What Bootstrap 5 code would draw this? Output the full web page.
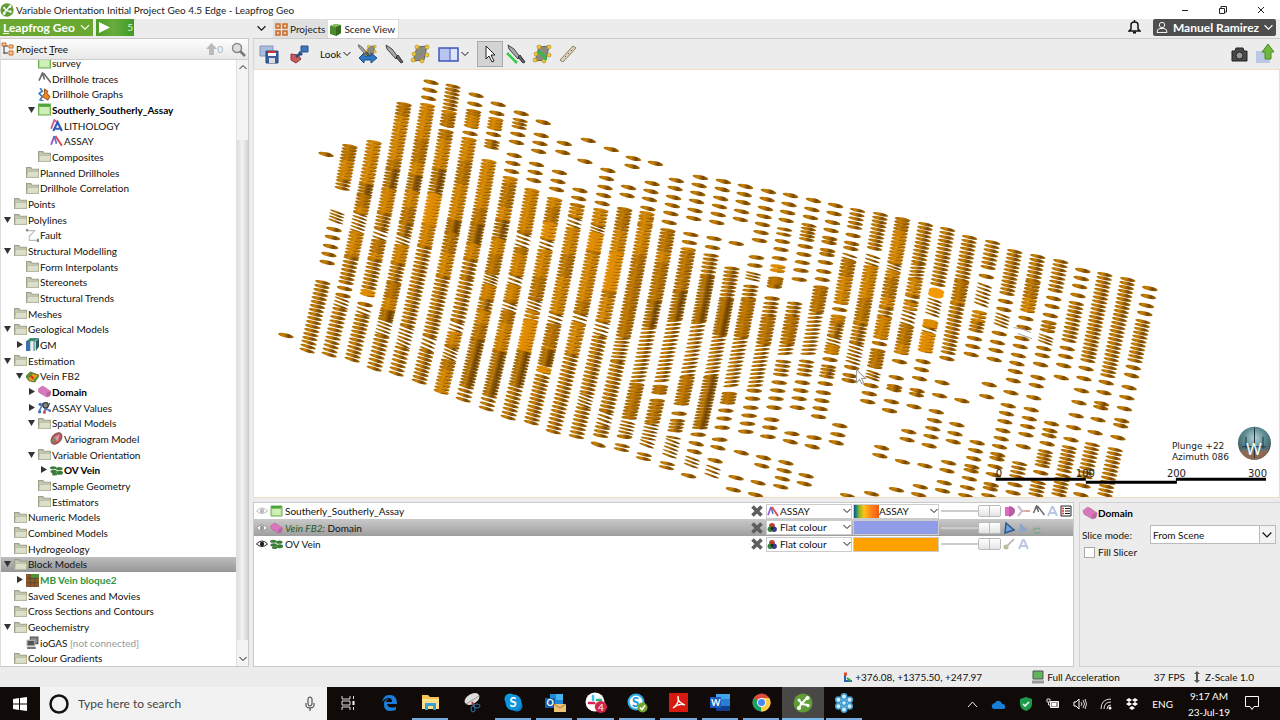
<!DOCTYPE html>
<html lang="en">
<head>
<meta charset="utf-8">
<meta name="viewport" content="width=device-width, initial-scale=1">
<title>Variable Orientation Initial Project Geo 4.5 Edge - Leapfrog Geo</title>
<link href="https://cdn.jsdelivr.net/npm/bootstrap@5.3.0/dist/css/bootstrap.min.css" rel="stylesheet">
<style>
body{font:10px/16px Lato,"Open Sans",sans-serif;color:#111;background:#ececec;height:100vh}
svg{display:block;flex:none}
button,select,input{font:inherit;color:inherit}
button{border:0;background:none;padding:0}
.gap-r{margin-right:2px}
.gap-l{margin-left:2px}
.titlebar{height:19px;background:#fff;color:#222}
.winbtn{width:38px;display:flex;justify-content:center}
.menubar{height:19px}
.menu-left{width:257px;flex:none}
.tabs-wrap{margin-left:7px}
.app-btn{background:#6aa832;color:#fff;font-weight:700;font-size:12px;width:93px;height:17px;line-height:16px;padding:0 3px}
.run-btn{background:linear-gradient(90deg,#4f9a2a,#68ad3c 45%,#3f9a26);color:#dff3c8;width:38px;height:17px;margin-left:3px;padding:0 1px 0 3px}
.user-btn{background:#4e4e4e;color:#fff;font-weight:700;font-size:12px;height:17px;width:123px;border-radius:2px;margin-right:4px;padding:0 3px}
.view-tab{height:19px;color:#222;text-decoration:none;padding:0 1px;border:1px solid #ddd;border-bottom:0;background:#e0e0e0}
.view-tab.active{background:#fff;padding-right:3px}
.left-pane{width:249px;border:1px solid #c9c9c9;border-left-color:#ddd;margin-bottom:20px;background:#fff}
.pane-head{height:21px;background:linear-gradient(#fdfdfd,#e8e8e8);border-bottom:1px solid #ccc}
.tree{margin:-5px 0 0;min-height:0}
.tree li{flex:1 1 0;min-height:0;display:flex;align-items:center;white-space:nowrap}
.tree li.sel{background:linear-gradient(#bdbdbd,#979797);}
.twist{width:12px;display:flex;justify-content:center;flex:none}
.d0{padding-left:1px}.d1{padding-left:13px}.d2{padding-left:25px}.d3{padding-left:37px}
.tree li svg{margin-right:1px}
.sbar{width:12px;background:#f3f3f3;border-left:1px solid #e2e2e2}
.sthumb{background:linear-gradient(90deg,#ddd,#f2f2f2 50%,#d2d2d2);margin-top:66px}
.toolbar{height:31px;border-top:1px solid #ccc;border-left:1px solid #d4d4d4}
.tool{width:26px;height:26px;display:flex;align-items:center;justify-content:center}
.tool.on{background:#d3d3d3;border:1px solid #aaa}
.scene{background:#fff;border:1px solid #f1dcc4;min-height:0;overflow:hidden}
.scene svg{width:100%;height:100%}
.lower{height:169px;padding-top:4px}
.shapes{background:#fff;border:1px solid #c9c9c9}
.srow{height:16px;padding-left:2px}
.srow.sel{height:17px;background:linear-gradient(#c9c9c9,#9e9e9e)}
.srow select{appearance:none;border:1px solid #ccc;background:#fff;height:15px;line-height:13px;padding:0 12px 0 13px;width:86px}
.pick{position:relative;width:86px;margin-left:1px}
.pick svg{position:absolute;top:2px}
.pick svg.lead-ic{left:1px}.pick svg.arrow-ic{right:1px;top:4px}
.srow select.grad{padding-left:25px;background:linear-gradient(90deg,#1b4f9e 0,#2a8c66 10%,#8db32a 20%,#ffc313 40%,#ff8a1c 65%,#f25a13 100%) 0 0/25px 100% no-repeat #fff}
.swatch{width:86px;height:15px;border:1px solid #ccc;margin-left:1px}
.blue{background:#909ce8}.orange{background:#ffa200}
.srow input[type=range]{appearance:none;width:60px;height:12px;margin:0 2px;background:linear-gradient(#ccc,#ccc) 0 50%/100% 2px no-repeat}
.srow input[type=range]::-webkit-slider-thumb{appearance:none;width:23px;height:12px;border:1px solid #bbb;border-radius:2px;background:linear-gradient(90deg,transparent 10px,#bbb 10px,#bbb 11px,transparent 11px),linear-gradient(#fff,#e4e4e4)}
.sicons{width:70px;gap:1px}
.props{width:201px;margin-left:5px;border:1px solid #d2d2d2;border-right:0;padding:2px 4px 0 2px}
.props select{appearance:none;width:126px;height:19px;border:1px solid #bbb;background:linear-gradient(90deg,#fff 108px,#bbb 108px,#bbb 109px,#f3f3f3 109px);padding:0 2px;line-height:16px}
.props .pick{width:126px;margin:0}
.props .pick svg{right:4px;top:6px}
.props input[type=checkbox]{appearance:none;width:11px;height:11px;border:1px solid #aaa;background:#fff;margin:0 3px 0 2px}
.statusbar{height:20px;margin-top:-20px;padding-right:26px}
.taskbar{height:33px;background:#100b08;color:#fff}
.start{width:40px;height:33px}
.searchbox{width:287px;background:#f2f2f2;padding:0 12px 0 9px;color:#333}
.searchbox input{border:0;background:none;font-size:12px;width:200px;margin-left:9px;padding:0;outline:0}
.searchbox input::placeholder{color:#444;opacity:1}
.apps{width:538px}
.apps button{flex:1 1 0;display:flex;align-items:center;justify-content:center;border-bottom:2px solid transparent}
.apps .run{border-image:linear-gradient(90deg,transparent 4px,#76a9dc 4px,#76a9dc 37px,transparent 37px) 2}
.apps .front{background:#4a4846;border-bottom-color:#76b9ed}
.tray{gap:13px;margin-right:21px}
.clock{width:46px;line-height:16px;text-align:center}
</style>
</head>
<body class="d-flex flex-column overflow-hidden">
<svg width="0" height="0" class="position-absolute" aria-hidden="true">
<defs>
<linearGradient id="gd" x1="0" x2="1"><stop offset="0" stop-color="#a66a00"/><stop offset=".35" stop-color="#c88005"/><stop offset=".68" stop-color="#744600"/><stop offset="1" stop-color="#b97400"/></linearGradient>
<linearGradient id="gk" x1="0" x2="1"><stop offset="0" stop-color="#9a6300"/><stop offset=".4" stop-color="#b87400"/><stop offset=".7" stop-color="#6b4100"/><stop offset="1" stop-color="#9a6000"/></linearGradient>
<linearGradient id="gs" x1="0" x2="1"><stop offset="0" stop-color="#b97300"/><stop offset=".4" stop-color="#d68800"/><stop offset="1" stop-color="#bd7500"/></linearGradient>
<linearGradient id="gn" x1="0" x2="1"><stop offset="0" stop-color="#a36600"/><stop offset=".4" stop-color="#c17900"/><stop offset="1" stop-color="#9a6000"/></linearGradient>
<radialGradient id="globe" cx=".5" cy=".35" r=".65"><stop offset="0" stop-color="#b9d4d8"/><stop offset=".5" stop-color="#5b8a93"/><stop offset="1" stop-color="#3c4d50"/></radialGradient>
<symbol id="folder" viewBox="0 0 12 12"><path d="M.5 10.5v-9h4l1 1.5h6v7.5z" fill="#c5c8b2" stroke="#9da18c"/><path d="M1.500 5h10v5.500H.8z" fill="#dcdfca" stroke="#b2b69f" stroke-width=".6"/></symbol>
<symbol id="table" viewBox="0 0 12 12"><path d="M.5 1h11v10H.5z" fill="#b8e59a" stroke="#6fae54"/><path d="M1 1h10v2.500H1z" fill="#4ea238"/><path d="M2 4h8v6H2z" fill="#d0f0b9"/></symbol>
<symbol id="traces" viewBox="0 0 12 12"><path d="M1 8 4 1l2 6M5 1l7 9" fill="none" stroke="#6a6a6a" stroke-width="1.500"/></symbol>
<symbol id="assay" viewBox="0 0 12 12"><path d="M1 9 4 1" stroke="#9b54cf" stroke-width="1.700"/><path d="M4 1l2 7" stroke="#4c71ce" stroke-width="1.500"/><path d="M5 1l6 9" stroke="#e0484c" stroke-width="1.800"/></symbol>
<symbol id="lith" viewBox="0 0 12 12"><path d="M1 9 4 1l4 3" fill="none" stroke="#d55086" stroke-width="1.600"/><path d="M3 11 7 3l4 8M4 9h7" fill="none" stroke="#315fb8" stroke-width="2"/></symbol>
<symbol id="graphs" viewBox="0 0 12 12"><path d="M2 0l2 3-3 2 3 3-2 3 3 1" fill="none" stroke="#3979c6" stroke-width="1.500"/><path d="M6 1l3 2-1 2 3 3-2 3-3-2-2-1 2-3z" fill="#ec8b20" stroke="#a95d20"/></symbol>
<symbol id="poly" viewBox="0 0 12 12"><path d="M1 1.500h7L3 7v3.500h8" fill="none" stroke="#bcbcc0"/><path d="M0 0h2v2H0zM10 9h2v3h-2z" fill="#799184"/></symbol>
<symbol id="gm" viewBox="0 0 12 12"><path d="M0 3 4 0h8L8 3v9H0z" fill="#3f8b72"/><path d="M0 3h3v9H0z" fill="#3c6fae"/><path d="M4 3h3v9H4z" fill="#eef"/><path d="M9 3l3-3v8l-3 4z" fill="#2f5b69"/></symbol>
<symbol id="vein" viewBox="0 0 12 12"><path d="M0 6l4-4 8 3-4 6-5-1z" fill="#e0a21b" stroke="#6e6a22"/><path d="M4 2l3 1-5 5-2-2zM7 9l4-4 1 1-4 5z" fill="#4e9b3c"/><path d="M4 5l3 3" stroke="#d32" stroke-width="2"/></symbol>
<symbol id="domain" viewBox="0 0 12 12"><path d="M0 4l4-3 2 1 6 4-1 4-3 1-7-4z" fill="#d977bd" stroke="#b860a0" stroke-width=".6"/><path d="M8 7l4-1-1 4-3 1z" fill="#b565a0"/></symbol>
<symbol id="values" viewBox="0 0 12 12"><path d="M1 10l3-7 3 5 4-6M5 11l2-4 4 2" fill="none" stroke="#5a78b8" stroke-width="1.500"/><circle cx="7" cy="4" r="2.500" fill="#888" stroke="#333"/><circle cx="2" cy="3" r="1.500" fill="#3f70bd"/><circle cx="1.500" cy="10" r="1.500" fill="#3f70bd"/><circle cx="6" cy="10.500" r="1.300" fill="#d5444a"/><circle cx="11" cy="9" r="1.200" fill="#3f70bd"/></symbol>
<symbol id="vario" viewBox="0 0 12 12"><ellipse cx="6" cy="6" rx="6" ry="4" transform="rotate(-48 6 6)" fill="#c0575b" stroke="#84554f"/><path d="M4 5l5-3-2 7z" fill="#d0a0b4"/><path d="M2 9l3-3" stroke="#689c55" stroke-width="2"/></symbol>
<symbol id="ov" viewBox="0 0 14 12"><g fill="#397d38"><ellipse cx="3.500" cy="3" rx="3.500" ry="1.700"/><ellipse cx="4" cy="7" rx="3.500" ry="1.700"/><ellipse cx="5" cy="10" rx="3" ry="1.500"/><ellipse cx="10" cy="4" rx="3.500" ry="1.700"/><ellipse cx="10.500" cy="8.500" rx="3.500" ry="2.200"/></g></symbol>
<symbol id="block" viewBox="0 0 12 12"><path d="M0 0h12v12H0z" fill="#8a5a2c"/><path d="M4 0h8v4H4z" fill="#4f9137"/><path d="M0 4h12M4 0v12M8 4v8M0 8h12" stroke="#5c4024" stroke-width=".7"/></symbol>
<symbol id="iogas" viewBox="0 0 12 12"><path d="M4 1h7v6H4z" fill="#888" stroke="#555"/><path d="M1 4h7v5H1z" fill="#555" stroke="#aaa"/><path d="M1 11h8" stroke="#777" stroke-width="2"/></symbol>
<symbol id="rgb" viewBox="0 0 12 12"><circle cx="6" cy="4" r="3.500" fill="#b8402f"/><circle cx="4" cy="8" r="3.300" fill="#37823a"/><circle cx="8.500" cy="8" r="3.300" fill="#353d80"/><circle cx="6" cy="7" r="1.500" fill="#222"/></symbol>
<symbol id="down" viewBox="0 0 8 6"><path d="M.5 1 4 4.500 7.500 1" fill="none" stroke="currentColor"/></symbol>
<symbol id="eye" viewBox="0 0 12 8"><path d="M.5 4Q6-2 11.500 4 6 9 .5 4z" fill="#fff" stroke="currentColor"/><circle cx="6" cy="4" r="2.200" fill="currentColor"/></symbol>
<symbol id="del" viewBox="0 0 12 12"><path d="M1.500 1.500l9 9m0-9l-9 9" stroke="#5e5e5e" stroke-width="3.600"/></symbol>
<symbol id="frog" viewBox="0 0 20 20"><circle cx="10" cy="10" r="9.500" fill="#5f9c35"/><path d="M14 5 8 11l-2 4M6 7l3 4 6 1" stroke="#fff" stroke-width="2" fill="none"/><circle cx="14.500" cy="5" r="2" fill="#fff"/><circle cx="6" cy="15" r="2" fill="#fff"/><circle cx="15" cy="12.500" r="1.700" fill="#fff"/><circle cx="6" cy="7" r="1.500" fill="#fff"/></symbol>
<symbol id="knife" viewBox="0 0 20 20"><path d="M2 1l6 4 6 8-2 2L3 5z" fill="#aaa" stroke="#444"/><path d="M12 13l2-2 5 7-2 1z" fill="#666" stroke="#333"/></symbol>
<symbol id="slab" viewBox="0 0 20 20"><path d="M7 3l10-1-3 14-11 1z" fill="#8b8b80" stroke="#666"/><g fill="#f3ca35" stroke="#a88417" stroke-width=".6"><circle cx="7" cy="3" r="2"/><circle cx="17" cy="3" r="2"/><circle cx="17" cy="11" r="2"/><circle cx="12" cy="17" r="2"/><circle cx="3" cy="16" r="2"/><circle cx="4" cy="10" r="2"/></g></symbol>
<symbol id="letterA" viewBox="0 0 12 12"><path d="M1.500 11 5.500 2h1l4 9M3 8h6" fill="none" stroke="#bdc7e4" stroke-width="2"/></symbol>
</defs></svg>

<header class="titlebar d-flex align-items-center">
<svg width="14" height="14" class="gap-r"><use href="#frog"/></svg><span class="flex-grow-1 text-nowrap">Variable Orientation Initial Project Geo 4.5 Edge - Leapfrog Geo</span>
<button class="winbtn" aria-label="Minimise"><svg width="8" height="8"><path d="M1 4.500h6" stroke="#222"/></svg></button>
<button class="winbtn" aria-label="Restore"><svg width="8" height="8"><path d="M.5 2.500h5v5h-5zM2 2V.5h5.500V6H6" fill="none" stroke="#222"/></svg></button>
<button class="winbtn" aria-label="Close"><svg width="8" height="8"><path d="M1 1l6 6m0-6L1 7" stroke="#222"/></svg></button>
</header>

<nav class="menubar d-flex align-items-start">
<div class="menu-left d-flex">
<button class="app-btn d-flex align-items-center justify-content-between text-nowrap"><span><u>L</u>eapfrog Geo</span><svg width="10" height="7"><use href="#down"/></svg></button>
<button class="run-btn d-flex justify-content-between align-items-start" aria-label="Processing queue"><svg width="12" height="16"><path d="M0 3l11 5.500L0 14z" fill="#fff"/></svg><span>5</span></button>
</div>
<button class="align-self-center" aria-label="Show tabs"><svg width="9" height="7"><use href="#down"/></svg></button>
<div class="d-flex tabs-wrap">
<a href="#" class="view-tab d-flex align-items-center"><svg width="13" height="13" class="gap-r"><path d="M1 1h4v4H1zM8 1h4v4H8zM1 8h4v4H1zM8 8h4v4H8z" fill="#f6c89c" stroke="#c86a2a" stroke-width="1.500"/></svg>Projects</a>
<a href="#" class="view-tab active d-flex align-items-center"><svg width="13" height="13" class="gap-r"><path d="M1 3l5-2 6 1v8l-5 3-6-2z" fill="#4e8a30"/><path d="M1 3l5-2 6 1-5 2z" fill="#8cc167"/><path d="M7 4l5-2v8l-5 3z" fill="#386b21"/></svg>Scene View</a>
</div>
<button class="ms-auto me-2 px-1" aria-label="Notifications"><svg width="13" height="16"><path d="M1 12h11l-2-2V6Q10 3 6.500 3T3 6v4zM6.500 1v2" fill="none" stroke="#111" stroke-width="1.500"/><path d="M5 13.500h3" stroke="#111" stroke-width="2"/></svg></button>
<button class="user-btn d-flex align-items-center justify-content-between text-nowrap"><svg width="12" height="13"><circle cx="6" cy="4" r="2.700" fill="none" stroke="#eee"/><path d="M1 11.500q0-4 3-4h4q3 0 3 4z" fill="none" stroke="#eee"/></svg>Manuel Ramirez<svg width="9" height="7"><use href="#down"/></svg></button>
</nav>

<div class="d-flex flex-grow-1" style="min-height:0">
<aside class="left-pane d-flex flex-column flex-shrink-0">
<div class="pane-head d-flex align-items-center flex-shrink-0"><svg width="13" height="14" class="gap-r"><path d="M3 1v11M3 4h4M3 11h4" stroke="#333" fill="none"/><path d="M1 1h4v3H1zM8 3h4v3H8zM8 9h4v4H8z" fill="#f6c89c" stroke="#c86a2a"/></svg><span class="flex-grow-1">Project <u>T</u>ree</span><svg width="11" height="12"><path d="M5.500 0 11 6H8v6H3V6H0z" fill="#bbb"/></svg><span class="text-secondary opacity-50 me-2">0</span><svg width="15" height="15" class="gap-r"><circle cx="6" cy="6" r="4.500" fill="#ddd" stroke="#888" stroke-width="1.500"/><path d="M9 9l5 5" stroke="#777" stroke-width="2.500"/></svg></div>
<div class="d-flex flex-grow-1 overflow-hidden" style="min-height:0">
<ul class="tree list-unstyled d-flex flex-column flex-grow-1" id="tree"></ul>
<div class="sbar d-flex flex-column align-items-center flex-shrink-0"><svg width="8" height="6" class="my-1"><path d="M.5 5 4 1.500 7.500 5" fill="none" stroke="#222"/></svg><div class="sthumb w-100 flex-grow-1"></div><svg width="8" height="6" class="mt-3 mb-1"><use href="#down"/></svg></div>
</div>
</aside>

<main class="d-flex flex-column flex-grow-1 ms-1" style="min-width:0">
<div class="toolbar d-flex align-items-center flex-shrink-0">
<button class="tool gap-l me-1" aria-label="Save scene"><svg width="20" height="20"><path d="M1 2h13v10H1z" fill="#a9bddc" stroke="#8297b8"/><path d="M7 7h12v12H7z" fill="#375f9f" stroke="#274778"/><path d="M9 7h8v5H9z" fill="#fff"/><path d="M9 7h8v2H9z" fill="#d42f2f"/><path d="M10 14h6v5h-6z" fill="#ddd"/></svg></button>
<button class="tool me-2" aria-label="Clear scene"><svg width="20" height="20"><path d="M2 10l7 1 3 4-5 4-5-3z" fill="#c95b5b" stroke="#8e3333"/><path d="M12 2h7v6h-7z" fill="#3b78c0" stroke="#294f81"/><path d="M12 9l-5 4M10 8l3 3" stroke="#244d87" stroke-width="2.500"/></svg></button>
<button class="d-flex align-items-center me-1"><span class="gap-r">Look</span><svg width="8" height="6"><use href="#down"/></svg></button>
<button class="tool" aria-label="Slicer"><svg width="22" height="20"><use href="#slab" x="7" y="0" width="13" height="14"/><use href="#knife" width="14" height="14"/><path d="M2 14l5-5v3h7V9l6 5-6 5v-3H7v3z" fill="#2d78c8" stroke="#1c4c89"/></svg></button>
<button class="tool" aria-label="Draw slicer"><svg width="20" height="20"><use href="#knife"/></svg></button>
<button class="tool" aria-label="Moving plane"><svg width="20" height="20"><use href="#slab"/></svg></button>
<button class="tool gap-l" aria-label="Split view"><svg width="21" height="15"><path d="M1 1h19v13H1z" fill="#b9c5f0" stroke="#4058b8" stroke-width="1.500"/><path d="M12 2h7v11h-7z" fill="#dde3fa"/><path d="M12 1v13" stroke="#4058b8"/></svg></button>
<svg width="8" height="6" class="me-2"><use href="#down"/></svg>
<button class="tool on" aria-label="Select"><svg width="13" height="18"><path d="M2 1v13l3-3 3 6 2-1-3-6h4z" fill="#fff" stroke="#222"/></svg></button>
<button class="tool" aria-label="Draw line"><svg width="20" height="20"><use href="#knife"/><path d="M1 9l10 10" stroke="#35cc45" stroke-width="2.500"/></svg></button>
<button class="tool" aria-label="Draw plane"><svg width="20" height="20"><use href="#slab"/><path d="M5 8q6 0 9 8" stroke="#35bb45" stroke-width="3" fill="none"/></svg></button>
<button class="tool" aria-label="Ruler"><svg width="20" height="20"><path d="M2 16 15 2l3 2L5 18z" fill="#ddd0b5" stroke="#8e806a"/><path d="M7 12l1 1m2-4 1 1m2-4 1 1" stroke="#75674f"/></svg></button>
<button class="tool ms-auto" aria-label="Screenshot"><svg width="17" height="15"><path d="M1 4h3l1-3h7l1 3h3v10H1z" fill="#494949" stroke="#222"/><circle cx="8.500" cy="8.500" r="3.500" fill="#999" stroke="#222"/></svg></button>
<button class="tool gap-r" aria-label="Export scene"><svg width="20" height="20"><path d="M1 7h14v12H1z" fill="#bac8e4"/><path d="M13 0l6 8h-3v7h-6V8H7z" fill="#70b83c" stroke="#4c8d25"/></svg></button>
</div>

<div class="scene flex-grow-1"><svg viewBox="255 70 1024 426" id="scene" role="img" aria-label="Disc view of OV Vein"><g id="discs"></g>
<path d="M1014 327q10 1 17 5M1018 333l14 5" stroke="#888" fill="none" stroke-width=".8"/>
<path d="M857 369v13l3-3 2 4 2-1-2-4h4z" fill="#fff" stroke="#999"/>
<g font-family="DejaVu Sans,sans-serif" font-size="10" fill="#222"><text x="1172" y="448" font-size="9">Plunge +22</text><text x="1172" y="459" font-size="9">Azimuth 086</text><text x="996" y="476">0</text><text x="1076" y="476">100</text><text x="1167" y="476">200</text><text x="1248" y="476">300</text></g>
<path d="M996 478.500h90M1176 478.500h90M1086 481.500h91" stroke="#000" stroke-width="3"/>
<circle cx="1254.500" cy="442.500" r="16.500" fill="url(#globe)"/><path d="M1240 448q14 6 29 0-4 11-15 11t-14-11z" fill="#a06c4c" opacity=".8"/><path d="M1254.500 427v30M1246 436v12M1263 436v12M1242 446h24" stroke="#1c3339" fill="none"/><text x="1246" y="454" font-family="Open Sans" font-size="17" fill="#fff">W</text>
</svg></div>

<div class="lower d-flex flex-shrink-0">
<div class="shapes flex-grow-1">
<div class="srow d-flex align-items-center"><svg width="12" height="8" class="gap-r" color="#bbb"><use href="#eye"/></svg><svg width="13" height="12" class="gap-r"><use href="#table"/></svg><span class="flex-grow-1">Southerly_Southerly_Assay</span><svg width="12" height="12" class="gap-r"><use href="#del"/></svg>
<div class="pick"><select aria-label="Assay colouring" class="d-block"><option>ASSAY</option></select><svg class="lead-ic" width="12" height="12"><use href="#assay"/></svg><svg class="arrow-ic" width="8" height="6"><use href="#down"/></svg></div>
<div class="pick"><select aria-label="Assay colourmap" class="grad d-block"><option>ASSAY</option></select><svg class="arrow-ic" width="8" height="6"><use href="#down"/></svg></div>
<input type="range" value="100" aria-label="Assay opacity"><div class="sicons d-flex"><svg width="13" height="13"><path d="M2 2h4v9H2z" fill="#dc6cc0"/><path d="M6 1q6 1 6 5t-6 6z" fill="#b95aa6"/></svg><svg width="14" height="12"><path d="M1 1l4 5-4 5M5 6h4" fill="none" stroke="#cbb6d0" stroke-width="2"/><path d="M9 6h4" stroke="#e9a08c" stroke-width="2"/></svg><svg width="13" height="12"><use href="#traces"/></svg><svg width="13" height="12"><use href="#letterA"/></svg><svg width="12" height="12"><path d="M1 1h10v10H1z" fill="#fff" stroke="#222"/><path d="M2 3.500h2M2 6h2M2 8.500h2" stroke="#d33" stroke-width="1.500"/><path d="M5 3.500h5M5 6h5M5 8.500h5" stroke="#222"/></svg></div></div>
<div class="srow sel d-flex align-items-center"><svg width="12" height="8" class="gap-r" color="#999"><use href="#eye"/></svg><svg width="13" height="12" class="gap-r"><use href="#domain"/></svg><span class="flex-grow-1"><i style="color:#245c24">Vein FB2:</i> Domain</span><svg width="12" height="12" class="gap-r"><use href="#del"/></svg>
<div class="pick"><select aria-label="Domain colouring" class="d-block"><option>Flat colour</option></select><svg class="lead-ic" width="10" height="11"><use href="#rgb"/></svg><svg class="arrow-ic" width="8" height="6"><use href="#down"/></svg></div>
<button class="swatch blue" aria-label="Domain colour"></button><input type="range" value="100" aria-label="Domain opacity"><div class="sicons d-flex"><svg width="13" height="12"><path d="M3 1l8 7-9 3z" fill="#6fa4dc" stroke="#2c578e" stroke-width="1.500"/></svg><svg width="13" height="12"><path d="M3 1l8 7-9 3z" fill="#8ea6c6"/></svg><svg width="12" height="12"><path d="M2 8l4-2 3 1M3 11h7" stroke="#7da98a" fill="none" stroke-width="1.500"/></svg></div></div>
<div class="srow d-flex align-items-center"><svg width="12" height="8" class="gap-r" color="#222"><use href="#eye"/></svg><svg width="13" height="12" class="gap-r"><use href="#ov"/></svg><span class="flex-grow-1">OV Vein</span><svg width="12" height="12" class="gap-r"><use href="#del"/></svg>
<div class="pick"><select aria-label="OV Vein colouring" class="d-block"><option>Flat colour</option></select><svg class="lead-ic" width="10" height="11"><use href="#rgb"/></svg><svg class="arrow-ic" width="8" height="6"><use href="#down"/></svg></div>
<button class="swatch orange" aria-label="OV Vein colour"></button><input type="range" value="100" aria-label="OV Vein opacity"><div class="sicons d-flex"><svg width="13" height="12"><path d="M3 9l8-8" stroke="#aaa" stroke-width="1.500"/><circle cx="3" cy="9" r="2.500" fill="#b5bd9f"/></svg><svg width="13" height="12"><use href="#letterA"/></svg></div></div>
</div>
<section class="props">
<div class="d-flex align-items-center fw-bold mb-1"><svg width="16" height="14"><use href="#domain"/></svg><span class="text-black">Domain</span></div>
<div class="d-flex align-items-center justify-content-between"><label for="slice">Slice mode:</label><div class="pick"><select id="slice" class="d-block"><option>From Scene</option></select><svg width="10" height="8"><use href="#down"/></svg></div></div>
<div class="d-flex align-items-center"><input type="checkbox" id="fill"><label for="fill">Fill Slicer</label></div>
</section>
</div>
<div style="height:20px" class="flex-shrink-0"></div>
</main>
</div>

<footer class="statusbar d-flex align-items-center justify-content-end flex-shrink-0">
<svg width="10" height="11" class="gap-r"><path d="M2 2v7h7" fill="none" stroke="#2b60b0" stroke-width="2"/><path d="M1 2h3" stroke="#e3472f" stroke-width="3"/><path d="M4 6l4 3" stroke="#38a046" stroke-width="2"/></svg><span style="margin-right:50px">+376.08, +1375.50, +247.97</span>
<svg width="13" height="14" class="gap-r"><path d="M1 1h10v8H1z" fill="#5fb45e" stroke="#555"/><path d="M0 12h12" stroke="#999" stroke-width="3"/></svg><span style="margin-right:34px">Full Acceleration</span><span class="me-2">37 FPS</span><svg width="8" height="12" class="me-1"><path d="M4 0l3 3H5v6h2l-3 3-3-3h2V3H1z" fill="#555"/></svg><span>Z-Scale 1.0</span>
</footer>

<div class="taskbar d-flex align-items-stretch flex-shrink-0">
<button class="start d-flex align-items-center justify-content-center" aria-label="Start"><svg width="14" height="14"><path d="M0 2l6-1v5.500H0zM7 1l7-1v6.500H7zM0 7.500h6V13l-6-1zM7 7.500h7V14l-7-1z" fill="#fff"/></svg></button>
<div class="searchbox d-flex align-items-center"><svg width="20" height="20"><circle cx="10" cy="10" r="8.500" fill="none" stroke="#111" stroke-width="2.500"/></svg><input type="text" placeholder="Type here to search" aria-label="Search"><svg width="10" height="16" class="ms-auto"><rect x="3" y="1" width="4" height="9" rx="2" fill="none" stroke="#333"/><path d="M1 7v3q0 2 4 2t4-2V7M5 12v3" fill="none" stroke="#333"/></svg></div>
<div class="apps d-flex">
<button aria-label="Task view"><svg width="14" height="14"><path d="M1 0v3h8V0M1 14v-3h8v3M1 5h8v4H1zM12.500 0v3m0 8v3" fill="none" stroke="#ddd"/><path d="M12.500 5v4" stroke="#fff" stroke-width="2"/></svg></button>
<button aria-label="Edge"><svg width="17" height="18"><path d="M1 8Q3 0 9 1q7 0 7 9H6q1 5 9 3v3Q2 20 3 9q1-4 5-4-3 1-3 3h6q0-4-3-4-4 0-7 4z" fill="#1b7dd8"/></svg></button>
<button class="run" aria-label="File Explorer"><svg width="19" height="17"><path d="M1 15V1h6l2 2h9v12z" fill="#f3c557"/><path d="M1 5h17v10H1z" fill="#ffe08a"/><path d="M4 16V9h11v7h-3v-4H7v4z" fill="#38a0d8"/></svg></button>
<button aria-label="Snip"><svg width="18" height="20"><ellipse cx="9" cy="6" rx="8" ry="5" transform="rotate(-30 9 6)" fill="#ddd"/><path d="M3 11L16 3" stroke="#999"/><path d="M9 9l2 4" stroke="#b33" stroke-width="2"/><ellipse cx="10" cy="16" rx="2" ry="3" fill="none" stroke="#2a7bb8"/><ellipse cx="14" cy="13" rx="3" ry="2" fill="none" stroke="#2a7bb8"/></svg></button>
<button class="run" aria-label="Skype"><svg width="19" height="19"><circle cx="6" cy="6" r="5.500" fill="#0a9cdc"/><circle cx="13" cy="13" r="5.500" fill="#0a78c8"/><circle cx="9.500" cy="9.500" r="8" fill="#0f94dc"/><text x="5.500" y="14" font-size="13" font-weight="700" fill="#fff">S</text></svg></button>
<button class="run" aria-label="Outlook"><svg width="22" height="20"><path d="M6 1h13v13H6z" fill="#1f8ad6"/><path d="M12 1h7v6h-7z" fill="#48b4ee"/><path d="M1 5h10v10H1z" fill="#0f5fae"/><text x="2.500" y="13" font-size="9" font-weight="700" fill="#fff">O</text><path d="M10 11h12v8H10z" fill="#efc375"/><path d="M10 11l6 4 6-4" fill="none" stroke="#a77c37"/></svg></button>
<button class="run" aria-label="Slack, 4 messages"><svg width="22" height="22"><circle cx="10" cy="10" r="9.500" fill="#fff"/><g stroke-width="2.500" stroke-linecap="round"><path d="M8 4v4" stroke="#36c5f0"/><path d="M12 8h4" stroke="#2eb67d"/><path d="M4 11h5" stroke="#e01e5a"/><path d="M11 12v4" stroke="#ecb22e"/></g><circle cx="16" cy="15" r="6" fill="#d2244f"/><text x="13" y="19" font-size="10" fill="#fff">4</text></svg></button>
<button class="run" aria-label="Skype for Business"><svg width="21" height="20"><circle cx="9" cy="9" r="8.500" fill="#2aaae2"/><circle cx="9" cy="9" r="6.500" fill="#fff"/><text x="5" y="14" font-size="13" font-weight="700" fill="#0f94dc">S</text><circle cx="15.500" cy="14.500" r="5" fill="#76a52b"/><path d="M13 14.500l2 2 3-4" fill="none" stroke="#fff" stroke-width="1.500"/></svg></button>
<button class="run" aria-label="Acrobat"><svg width="19" height="19"><path d="M0 0h19v19H0z" fill="#d7190f"/><path d="M4 15q7-5 5-12-1 6 7 9-6-2-12 3z" fill="none" stroke="#fff" stroke-width="1.300"/></svg></button>
<button class="run" aria-label="Word"><svg width="20" height="19"><path d="M6 1h14v17H6z" fill="#2b7cd3"/><path d="M6 1h14v5H6z" fill="#41a5ee"/><path d="M6 13h14v5H6z" fill="#103f91"/><path d="M0 4h11v11H0z" fill="#185abd"/><text x="1" y="13" font-size="9" font-weight="700" fill="#fff">W</text></svg></button>
<button class="run" aria-label="Chrome"><svg width="19" height="19"><circle cx="9.500" cy="9.500" r="9" fill="#dd4b3e"/><path d="M9.500 9.500 1.700 5A9 9 0 0 0 9 18.500z" fill="#1aa260"/><path d="M9.500 9.500h-.5L9 18.500A9 9 0 0 0 17.300 5H9z" fill="#ffcd46"/><circle cx="9.500" cy="9.500" r="4.500" fill="#fff"/><circle cx="9.500" cy="9.500" r="3.500" fill="#4587f3"/></svg></button>
<button class="front" aria-label="Leapfrog Geo"><svg width="20" height="20"><use href="#frog"/></svg></button>
<button class="run" aria-label="Leapfrog Central"><svg width="20" height="20"><circle cx="10" cy="10" r="7" fill="#eef7ff"/><g fill="#d8ecf8" stroke="#3e9bd0" stroke-width="1.500"><circle cx="10" cy="3.500" r="2.700"/><circle cx="15.600" cy="6.700" r="2.700"/><circle cx="15.600" cy="13.300" r="2.700"/><circle cx="10" cy="16.500" r="2.700"/><circle cx="4.400" cy="13.300" r="2.700"/><circle cx="4.400" cy="6.700" r="2.700"/><circle cx="10" cy="10" r="2.500"/></g></svg></button>
</div>
<div class="tray d-flex align-items-center ms-auto">
<svg width="11" height="8"><path d="M1 7l4.500-5L10 7" fill="none" stroke="#eee"/></svg>
<svg width="15" height="12"><path d="M3 11Q0 10 1 7q1-2 3-2 2-4 6-1 1 1 1 2 4 0 3 4l-1 1z" fill="#1680d8"/></svg>
<svg width="14" height="14"><path d="M7 0l6 2v5q0 5-6 7-6-2-6-7V2z" fill="#1e9a4c"/><path d="M4 7l2 2 4-4" fill="none" stroke="#fff" stroke-width="1.500"/></svg>
<svg width="14" height="11"><path d="M4.500 3.500h8v6h-8z" fill="#999" stroke="#fff"/><path d="M6 5h4v3H6z" fill="#fff"/><path d="M1 1h3v3H1zM2.500 4v3h2" fill="none" stroke="#ddd"/></svg>
<svg width="14" height="12"><path d="M1 4h2l3-3v10L3 8H1z" fill="none" stroke="#fff"/><path d="M8 4q2 2 0 4M10 2q3 4 0 8M12 1q3 5 0 10" fill="none" stroke="#ddd"/></svg>
<svg width="12" height="12"><path d="M1 11Q1 1 11 1M4 11q0-7 7-7M7 11q0-4 4-4" fill="none" stroke="#ddd"/><circle cx="10" cy="10" r="1.500" fill="#fff"/></svg>
<svg width="14" height="12"><path d="M4 0l3 2-3 2-3-2zM10 0l3 2-3 2-3-2zM4 4l3 2-3 2-3-2zM10 4l3 2-3 2-3-2zM7 8l3 2-3 2-3-2z" fill="#fff"/></svg>
<span>ENG</span>
<div class="clock text-nowrap">9:17 AM<br>23-Jul-19</div>
<svg width="14" height="15"><path d="M.5 .5h13v10H9l-2 3-2-3H.5z" fill="none" stroke="#fff"/></svg>
</div>
</div>

<script src="https://cdn.jsdelivr.net/npm/bootstrap@5.3.0/dist/js/bootstrap.bundle.min.js"></script>
<script>
// Project tree: depth, twist (v open, > closed, - none), icon, label, flags
const rows = [
[2,'-','table','survey'],[2,'-','traces','Drillhole traces'],[2,'-','graphs','Drillhole Graphs'],[2,'v','table','Southerly_Southerly_Assay','b'],
[3,'-','lith','LITHOLOGY'],[3,'-','assay','ASSAY'],[2,'-','folder','Composites'],[1,'-','folder','Planned Drillholes'],[1,'-','folder','Drillhole Correlation'],
[0,'-','folder','Points'],[0,'v','folder','Polylines'],[1,'-','poly','Fault'],[0,'v','folder','Structural Modelling'],[1,'-','folder','Form Interpolants'],
[1,'-','folder','Stereonets'],[1,'-','folder','Structural Trends'],[0,'-','folder','Meshes'],[0,'v','folder','Geological Models'],[1,'>','gm','GM'],
[0,'v','folder','Estimation'],[1,'v','vein','Vein FB2'],[2,'>','domain','Domain','b'],[2,'>','values','ASSAY Values'],[2,'v','folder','Spatial Models'],
[3,'-','vario','Variogram Model'],[2,'v','folder','Variable Orientation'],[3,'>','ov','OV Vein','b'],[2,'-','folder','Sample Geometry'],[2,'-','folder','Estimators'],
[0,'-','folder','Numeric Models'],[0,'-','folder','Combined Models'],[0,'-','folder','Hydrogeology'],[0,'v','folder','Block Models','s'],[1,'>','block','MB Vein bloque2','g'],
[0,'-','folder','Saved Scenes and Movies'],[0,'-','folder','Cross Sections and Contours'],[0,'v','folder','Geochemistry'],[1,'-','iogas','ioGAS <span style="color:#999">[not connected]</span>'],[0,'-','folder','Colour Gradients']];
document.getElementById('tree').innerHTML = rows.map(([d,t,i,l,f]) => {
  const tw = t==='v' ? '<svg width="8" height="8"><path d="M0 1h7L3.500 7z" fill="#333"/></svg>' : t==='>' ? '<svg width="8" height="8"><path d="M1 0v7l6-3.500z" fill="#333"/></svg>' : '';
  const c = f==='b' ? 'fw-bold text-black' : f==='g' ? 'fw-bold' : '';
  return `<li class="d${d} ${f==='s'?'sel':''}"><span class="twist">${tw}</span><svg width="13" height="13"><use href="#${i}"/></svg><span class="${c}" ${f==='g'?'style="color:#2f9440"':''}>${l}</span></li>`;
}).join('');

// Disc columns: top x,y, bottom x,y, then runs. Run letter sets spacing and shape.
const cols = `327,154,287,335|S154,335
351,145,308,350|D146-178 M181-188 L212-221 S229,237,246,254,262 M282-350
375,142,330,354|D142-183 K185-194 D196-212 L214-231 D233-256 M258-282 S288,295 L299-306 M309-354
405,104,353,359|D104-168 K170-189 D190-212 M214-228 L230-238 D241-258 M260-287 B291,294 S304 L309-313 M316-359
432,82,375,368|S82,90,98 D105-174 K176-191 D192-222 M224-234 L236-243 D246-262 M264-282 D284-309 K311-319 L320-334 M336-368
454,86,397,373|M86-112 D112-125 D131-168 K170-193 B195-224 D225-245 M247-290 M294-325 L327-345 M348-373
477,95,420,381|S95,104 D111-126 S133 D139-219 K221-232 D234-275 M277-335 L337-349 M351-381
499,104,442,391|S104,113 D119-128 S134 M141-147 D161-223 K225-243 D245-258 M260-276 M279-320 L322-330 D333-346 L348-358 D361-391
522,113,464,399|S113 M120-127 S134,142,155,163,171 D178-219 K221-238 D240-272 L275-284 D286-298 M300-310 D312-338 K340-383 M386-399
544,122,487,408|S122,135,143,151,164,172,180 D190-232 L234-246 D249-274 L276-284 D286-301 L303-310 D312-350 K352-392 M395-408
565,143,509,417|S143,152,172,181,189 D199-222 B224-238 L240-248 D251-298 L300-310 D312-320 B322-350 K352-382 M385-417
589,140,532,422|S140,161,190,198 D205-216 L218-226 D229-312 L314-322 D325-348 K350-364 B368,371 M376-422
612,149,554,431|S149,170,178,187,195,203 D210-224 L226-232 B234-250 D252-312 L314-322 D324-352 M355-431
634,158,577,436|S158,166,187,195 D209-252 B254-290 D292-320 L322-334 M337-392 L395-405 M408-436
656,163,599,444|S163,183,191,199,208,217,225 D213-335 F338-360 M362-410 L412-424 M427-435 S444
677,180,622,449|S180,188,197,205,213,222 D230-300 K302-325 F328-380 D384-417 L422-432 S436 M445-449
701,177,644,458|S177,185,193,201,210,218,234,242 D249-290 K292-318 F320-380 D386-392 D400-421 L424-445 M454-458
724,181,667,467|S181,189,198,206,214,222,238,247 M255-275 K277-320 F322-375 D377-403 S413 M420-430 L437-455 M463-467
746,186,689,476|S186,194,202,211,219,243 M268-298 K300-333 F336-375 K377-427 S434,443,451 L458-465 S475
769,191,711,481|S191,199,208,216,224,232,240,257,265 L273-279 M286-298 D300-335 F338-385 D393-402 S410,418,427,439,447,460 L467-475
791,195,734,489|S195,204,212,220,241,249,258,286,298 M229-234 B266,270 D278-283 M303-315 D318-342 F345-385 S390,398,407,415,423,431,452,477,489
814,200,756,494|S200,209,217,246,254,262,270,279 M225-239 M303-315 D318-342 F345-353 M361-374 S382,390,398,407,419,427,436,457,465,482,494
836,205,779,496|S205,213,222,230,238,242,250,254,262,271,279 D287-310 F313-353 M361-374 S382,390,398,407,433,441,462,470,478,486
858,210,802,496|M210-227 S235,243,248 L255-259 D261-302 S309 D316-322 M325-335 L337-344 D346-352 S359 M366-376 S383,392,400,408,416,437,446,475,483
881,214,825,496|M214-248 L256-264 D267-322 M324-342 L344-362 S367,375,380,425,434,442
903,219,848,495|D219-262 L264-270 D272-306 M308-316 D318-337 S343 D350-366 L372-378 S385,393,401,495
926,224,872,493|M224-262 F264-278 D280-294 M296-301 D304-308 L312-324 D326-352 S361,377,386,389,401,410,447,455,493
948,229,896,493|M229-284 O291,294 L300-314 B321-326 L328-332 B334-350 S361,369,378,390,394,406,431,439,461,489
970,237,919,494|M237-280 D282-302 M304-352 S358,382,395,411,420,428,436,445,465,486,494
993,242,942,494|M242-267 S276 L285-304 D312-320 M323-330 S338,346,354,400,424,433,441,462,470,482,490
1015,251,966,495|M251-293 S301,309 L315-325 S333,342,350,359,384,396,442,450,458,466,470,478,487,495
1038,256,989,495|M256-280 D282-310 S318,327,338,346,355,363,371,380,392,405,413,421,430,438,446,454,458,466,474,484,488,495
1061,261,1013,494|M261-290 S298,306,315 D322-330 L336-342 S348,355,364,377,385,397,409,418,426,434,446 M463-476 S484,492
1083,270,1036,494|S270,278,286,295 M303-340 S348,356,365,377,423,430,435,443,472 M451-465 M482-494
1105,274,1059,494|M274-360 S368,378,390,402,415,427,439 M447-470 M475-494
1128,279,1081,494|M279-375 S382,392,403,407,419,432 M444-476 S485,494
1150,288,1105,494|S288,296,305,313,367,375,387,397,408,420,425,437 M321-360 M449-494`;
const kinds = {S:[8.3,2.1,13,'url(#gd)'],D:[3.3,1.9,11,'url(#gs)'],B:[3.2,2.1,12,'#e08d04'],O:[3,3.6,12,'#f39a08'],K:[3.1,1.7,10,'url(#gk)'],M:[4,1.7,13,'url(#gd)'],L:[3.6,1.1,20,'url(#gk)'],F:[4,1.4,4,'url(#gd)']};
let out = '';
cols.split('\n').forEach((line, i) => {
  const [head, body] = line.split('|'), [xt,yt,xb,yb] = head.split(',').map(Number), k = i - 1;
  body.split(' ').forEach(run => {
    const [step, ry, tilt, fill] = kinds[run[0]];
    const span = run.slice(1).split('-').map(Number);
    let ys = run.slice(1).split(',').map(Number);
    if (span.length === 2) { ys = []; const n = Math.max(1, Math.round((span[1]-span[0])/step)); for (let j=0;j<=n;j++) ys.push(span[0]+(span[1]-span[0])*j/n); }
    ys.forEach(y => {
      const x = xt + (xb-xt)*(y-yt)/(yb-yt) + (k>17?8e-5:1.6e-4)*(y-yt)*(yb-y);
      const near = Math.exp(-Math.pow((k-17)/5,2)) * Math.min(1, Math.max(0,(y-210)/90)) * (y>440?0:1);
      const a = tilt - 10*near + (k<14 && y>340 ? 4 : 0);
      const f = run[0]==='D' && (near>.4 || (k+Math.floor(y/23))%3===0) ? 'url(#gn)' : fill;
      const at = `transform="translate(${x.toFixed(1)} ${y.toFixed(1)}) rotate(${a.toFixed(1)})"`;
      out += `<ellipse rx="8" ry="${ry}" fill="${f}" ${at}/>`;
      if ('DBK'.includes(run[0])) out += `<path d="M0 1.500L7 1" stroke="#744600" stroke-width=".9" opacity=".75" ${at}/>`;
    });
  });
});
document.getElementById('discs').innerHTML = out;
</script>
</body>
</html>
